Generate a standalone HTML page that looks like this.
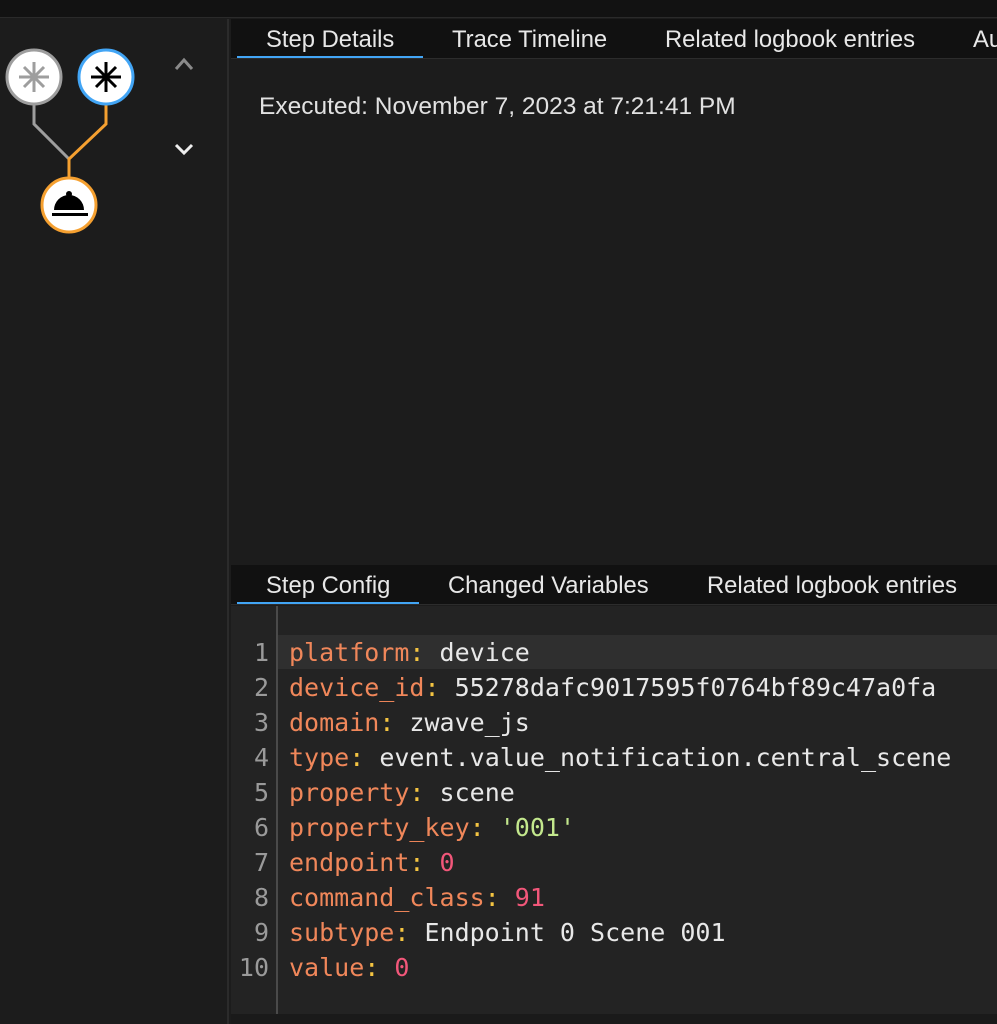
<!DOCTYPE html>
<html><head><style>
*{margin:0;padding:0;box-sizing:border-box}
html,body{overflow:hidden}
body{width:997px;height:1024px;background:#1c1c1c;position:relative;font-family:"Liberation Sans",sans-serif;color:#e1e1e1}
.top{position:absolute;left:0;top:0;width:997px;height:18px;background:#121212;border-bottom:1px solid #2a2a2a}
.left{position:absolute;left:0;top:19px;width:229px;height:1005px;background:#1c1c1c;border-right:2px solid #2b2b2b}
.tabs{position:absolute;left:231px;width:766px;height:40px;background:#111;border-bottom:1px solid #2c2c2c;overflow:hidden}
.tab{position:absolute;top:7px;font-size:23.8px;color:#e8e8e8;white-space:nowrap}
.ul{position:absolute;bottom:-1px;height:3px;background:#42a5f5}
.exec{position:absolute;left:259px;top:93px;font-size:24.5px;color:#e1e1e1;white-space:nowrap}
.code{position:absolute;left:231px;top:606px;width:766px;height:408px;background:#232323}
.gl{position:absolute;left:276px;top:606px;width:2px;height:408px;background:#4a4a4a}
.hl{position:absolute;left:278px;top:635px;width:719px;height:34px;background:#2f2f2f}
.ln{position:absolute;font-family:"DejaVu Sans Mono","Liberation Mono",monospace;font-size:25px;white-space:pre;line-height:35px}
.nums{left:231px;width:38px;text-align:right;color:#9a9a9a;top:635px}
.src{left:289px;top:635px;color:#e8e8e8}
.k{color:#f0875a}.c{color:#f5c542}.n{color:#f2577a}.s{color:#c3e88d}
.bot{position:absolute;left:231px;top:1014px;width:766px;height:10px;background:#1a1a1a}
</style></head><body>
<div class="top"></div>
<div class="left">
<svg width="229" height="240" style="position:absolute;left:0;top:-19px">
<polyline points="34,104 34,124 69,159" fill="none" stroke="#9e9e9e" stroke-width="3"/>
<polyline points="106,104 106,124 69,159 69,178" fill="none" stroke="#f5a030" stroke-width="3"/>
<circle cx="34" cy="77" r="27" fill="#fff" stroke="#9e9e9e" stroke-width="3"/>
<g stroke="#9e9e9e" stroke-width="3"><line x1="34" y1="62" x2="34" y2="92"/><line x1="19" y1="77" x2="49" y2="77"/><line x1="24" y1="67" x2="44" y2="87"/><line x1="44" y1="67" x2="24" y2="87"/></g>
<circle cx="106" cy="77" r="27" fill="#fff" stroke="#42a5f5" stroke-width="3"/>
<g stroke="#000" stroke-width="3"><line x1="106" y1="62" x2="106" y2="92"/><line x1="91" y1="77" x2="121" y2="77"/><line x1="96" y1="67" x2="116" y2="87"/><line x1="116" y1="67" x2="96" y2="87"/></g>
<circle cx="69" cy="205" r="27" fill="#fff" stroke="#f5a030" stroke-width="3"/>
<circle cx="69" cy="194" r="3" fill="#000"/>
<path d="M54 210 A15 15 0 0 1 84 210 Z" fill="#000"/>
<rect x="52" y="213" width="36" height="3" fill="#000"/>
<polyline points="176,69 184,60 192,69" fill="none" stroke="#8a8a8a" stroke-width="3"/>
<polyline points="176,145 184,153 192,145" fill="none" stroke="#eee" stroke-width="3"/>
</svg>
</div>
<div class="tabs" style="top:19px">
<div class="tab" style="left:35px">Step Details</div>
<div class="tab" style="left:221px">Trace Timeline</div>
<div class="tab" style="left:434px">Related logbook entries</div>
<div class="tab" style="left:742px">Automation Config</div>
<div class="ul" style="left:6px;width:186px"></div>
</div>
<div class="exec">Executed: November 7, 2023 at 7:21:41 PM</div>
<div class="tabs" style="top:565px">
<div class="tab" style="left:35px">Step Config</div>
<div class="tab" style="left:217px">Changed Variables</div>
<div class="tab" style="left:476px">Related logbook entries</div>
<div class="ul" style="left:6px;width:182px"></div>
</div>
<div class="code"></div>
<div class="hl"></div>
<div class="gl"></div>
<div class="ln nums">1
2
3
4
5
6
7
8
9
10</div>
<div class="ln src"><span class="k">platform</span><span class="c">:</span> device
<span class="k">device_id</span><span class="c">:</span> 55278dafc9017595f0764bf89c47a0fa
<span class="k">domain</span><span class="c">:</span> zwave_js
<span class="k">type</span><span class="c">:</span> event.value_notification.central_scene
<span class="k">property</span><span class="c">:</span> scene
<span class="k">property_key</span><span class="c">:</span> <span class="s">'001'</span>
<span class="k">endpoint</span><span class="c">:</span> <span class="n">0</span>
<span class="k">command_class</span><span class="c">:</span> <span class="n">91</span>
<span class="k">subtype</span><span class="c">:</span> Endpoint 0 Scene 001
<span class="k">value</span><span class="c">:</span> <span class="n">0</span></div>
<div class="bot"></div>
</body></html>
